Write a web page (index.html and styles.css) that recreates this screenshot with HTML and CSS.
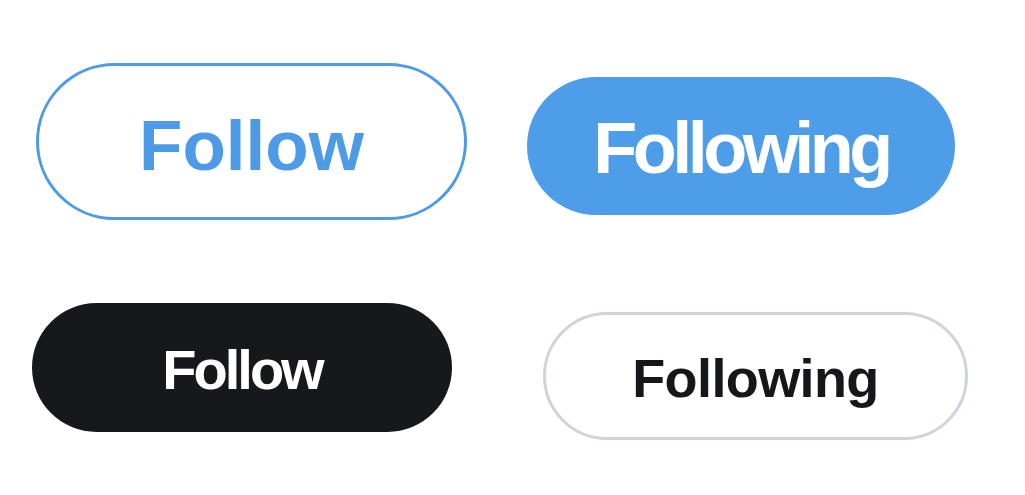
FILE: index.html
```html
<!DOCTYPE html>
<html lang="en">
<head>
<meta charset="utf-8">
<title>Follow buttons</title>
<link rel="stylesheet" href="styles.css">
</head>
<body>
  <main class="board">
    <div class="row row-large">
      <button class="btn btn-outline-blue">Follow</button>
      <button class="btn btn-solid-blue">Following</button>
    </div>
    <div class="row row-small">
      <button class="btn btn-solid-dark">Follow</button>
      <button class="btn btn-outline-grey">Following</button>
    </div>
  </main>
</body>
</html>
```
FILE: styles.css
```css
html, body {
  margin: 0;
  padding: 0;
  background: #ffffff;
}

.board {
  width: 1025px;
  height: 495px;
  display: flex;
  flex-direction: column;
}

.row {
  display: flex;
  align-items: flex-start;
}

.row-large {
  padding-left: 36px;
  padding-top: 63px;
  gap: 60px;
}

.row-small {
  padding-left: 32px;
  padding-top: 83px;
  gap: 91px;
}

.btn {
  box-sizing: border-box;
  display: flex;
  align-items: center;
  justify-content: center;
  border-radius: 9999px;
  font-family: "Liberation Sans", Arial, sans-serif;
  font-weight: 700;
  line-height: 1;
  padding: 0;
  margin: 0;
  cursor: pointer;
}

.btn-outline-blue {
  width: 431px;
  height: 157px;
  border: 3.5px solid #4d9be6;
  background: #ffffff;
  color: #4d9be6;
  font-size: 71px;
  padding-top: 7px;
}

.btn-solid-blue {
  width: 428px;
  height: 138px;
  margin-top: 14px;
  border: none;
  background: #4d9de8;
  color: #ffffff;
  font-size: 72px;
  letter-spacing: -4.5px;
  padding-top: 4px;
}

.btn-solid-dark {
  width: 420px;
  height: 129px;
  border: none;
  background: #17181c;
  color: #ffffff;
  font-size: 56px;
  letter-spacing: -3px;
  padding-top: 4px;
}

.btn-outline-grey {
  width: 425px;
  height: 128px;
  margin-top: 9px;
  border: 3px solid #cdd4dc;
  background: #ffffff;
  color: #15171b;
  font-size: 54px;
  letter-spacing: -0.6px;
  padding-top: 3px;
}
```
